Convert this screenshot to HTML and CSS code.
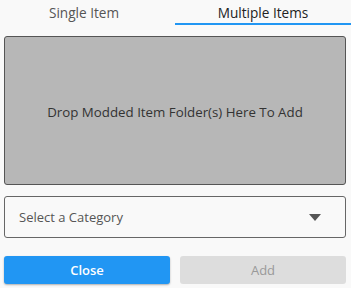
FILE: index.html
```html
<!DOCTYPE html>
<html>
<head>
<meta charset="utf-8">
<link rel="stylesheet" href="styles.css">
</head>
<body>
<div class="app">
  <div class="tabs">
    <div class="tab first">Single Item</div>
    <div class="tab active">Multiple Items</div>
  </div>
  <div class="drop">Drop Modded Item Folder(s) Here To Add</div>
  <div class="select">
    <span class="placeholder">Select a Category</span>
    <svg class="arrow" width="12" height="7" viewBox="0 0 12 7"><path d="M0 0H12L6 7Z" fill="#555"/></svg>
  </div>
  <div class="buttons">
    <button class="btn primary">Close</button>
    <button class="btn disabled">Add</button>
  </div>
</div>
</body>
</html>
```
FILE: styles.css
```css
html, body {
  margin: 0;
  padding: 0;
  background: #f9f9f9;
}
body {
  font-family: "Open Sans", "Noto Sans", sans-serif;
  font-size: 13px;
  color: #333;
}
.app {
  width: 351px;
  height: 288px;
  padding: 0 5px 0 4px;
  box-sizing: border-box;
  display: flex;
  flex-direction: column;
}
.tabs {
  display: grid;
  grid-template-columns: 175px 1fr;
  margin: 0 -5px 0 -4px;
  height: 25px;
}
.tab {
  text-align: center;
  font-size: 13.6px;
  color: #555;
  box-sizing: border-box;
  padding-top: 2px;
  line-height: 21px;
}
.tab.first {
  padding-right: 7px;
}
.tab.active {
  color: #222;
  border-bottom: 2px solid #2196f3;
}
.drop {
  margin-top: 11px;
  height: 149px;
  box-sizing: border-box;
  background: #b7b7b7;
  border: 1px solid #555;
  border-radius: 3px;
  display: flex;
  align-items: center;
  justify-content: center;
  color: #333;
  font-size: 13.3px;
  padding-top: 2px;
}
.select {
  margin-top: 11px;
  height: 42px;
  box-sizing: border-box;
  border: 1px solid #666;
  border-radius: 3px;
  display: flex;
  align-items: center;
  justify-content: space-between;
  padding: 0 24px 0 14px;
  background: #f9f9f9;
}
.placeholder {
  color: #555;
  font-size: 13px;
}
.buttons {
  margin-top: 18px;
  display: grid;
  grid-template-columns: 166px 166px;
  justify-content: space-between;
}
.btn {
  height: 28px;
  border: none;
  border-radius: 3px;
  font-family: "Open Sans", "Noto Sans", sans-serif;
  font-size: 13px;
  padding: 0;
}
.btn.primary {
  background: #2196f3;
  color: #fff;
  font-weight: 600;
  box-shadow: 0 1px 2px rgba(0,0,0,0.3);
}
.btn.disabled {
  background: #dddddd;
  color: #999;
}
```
